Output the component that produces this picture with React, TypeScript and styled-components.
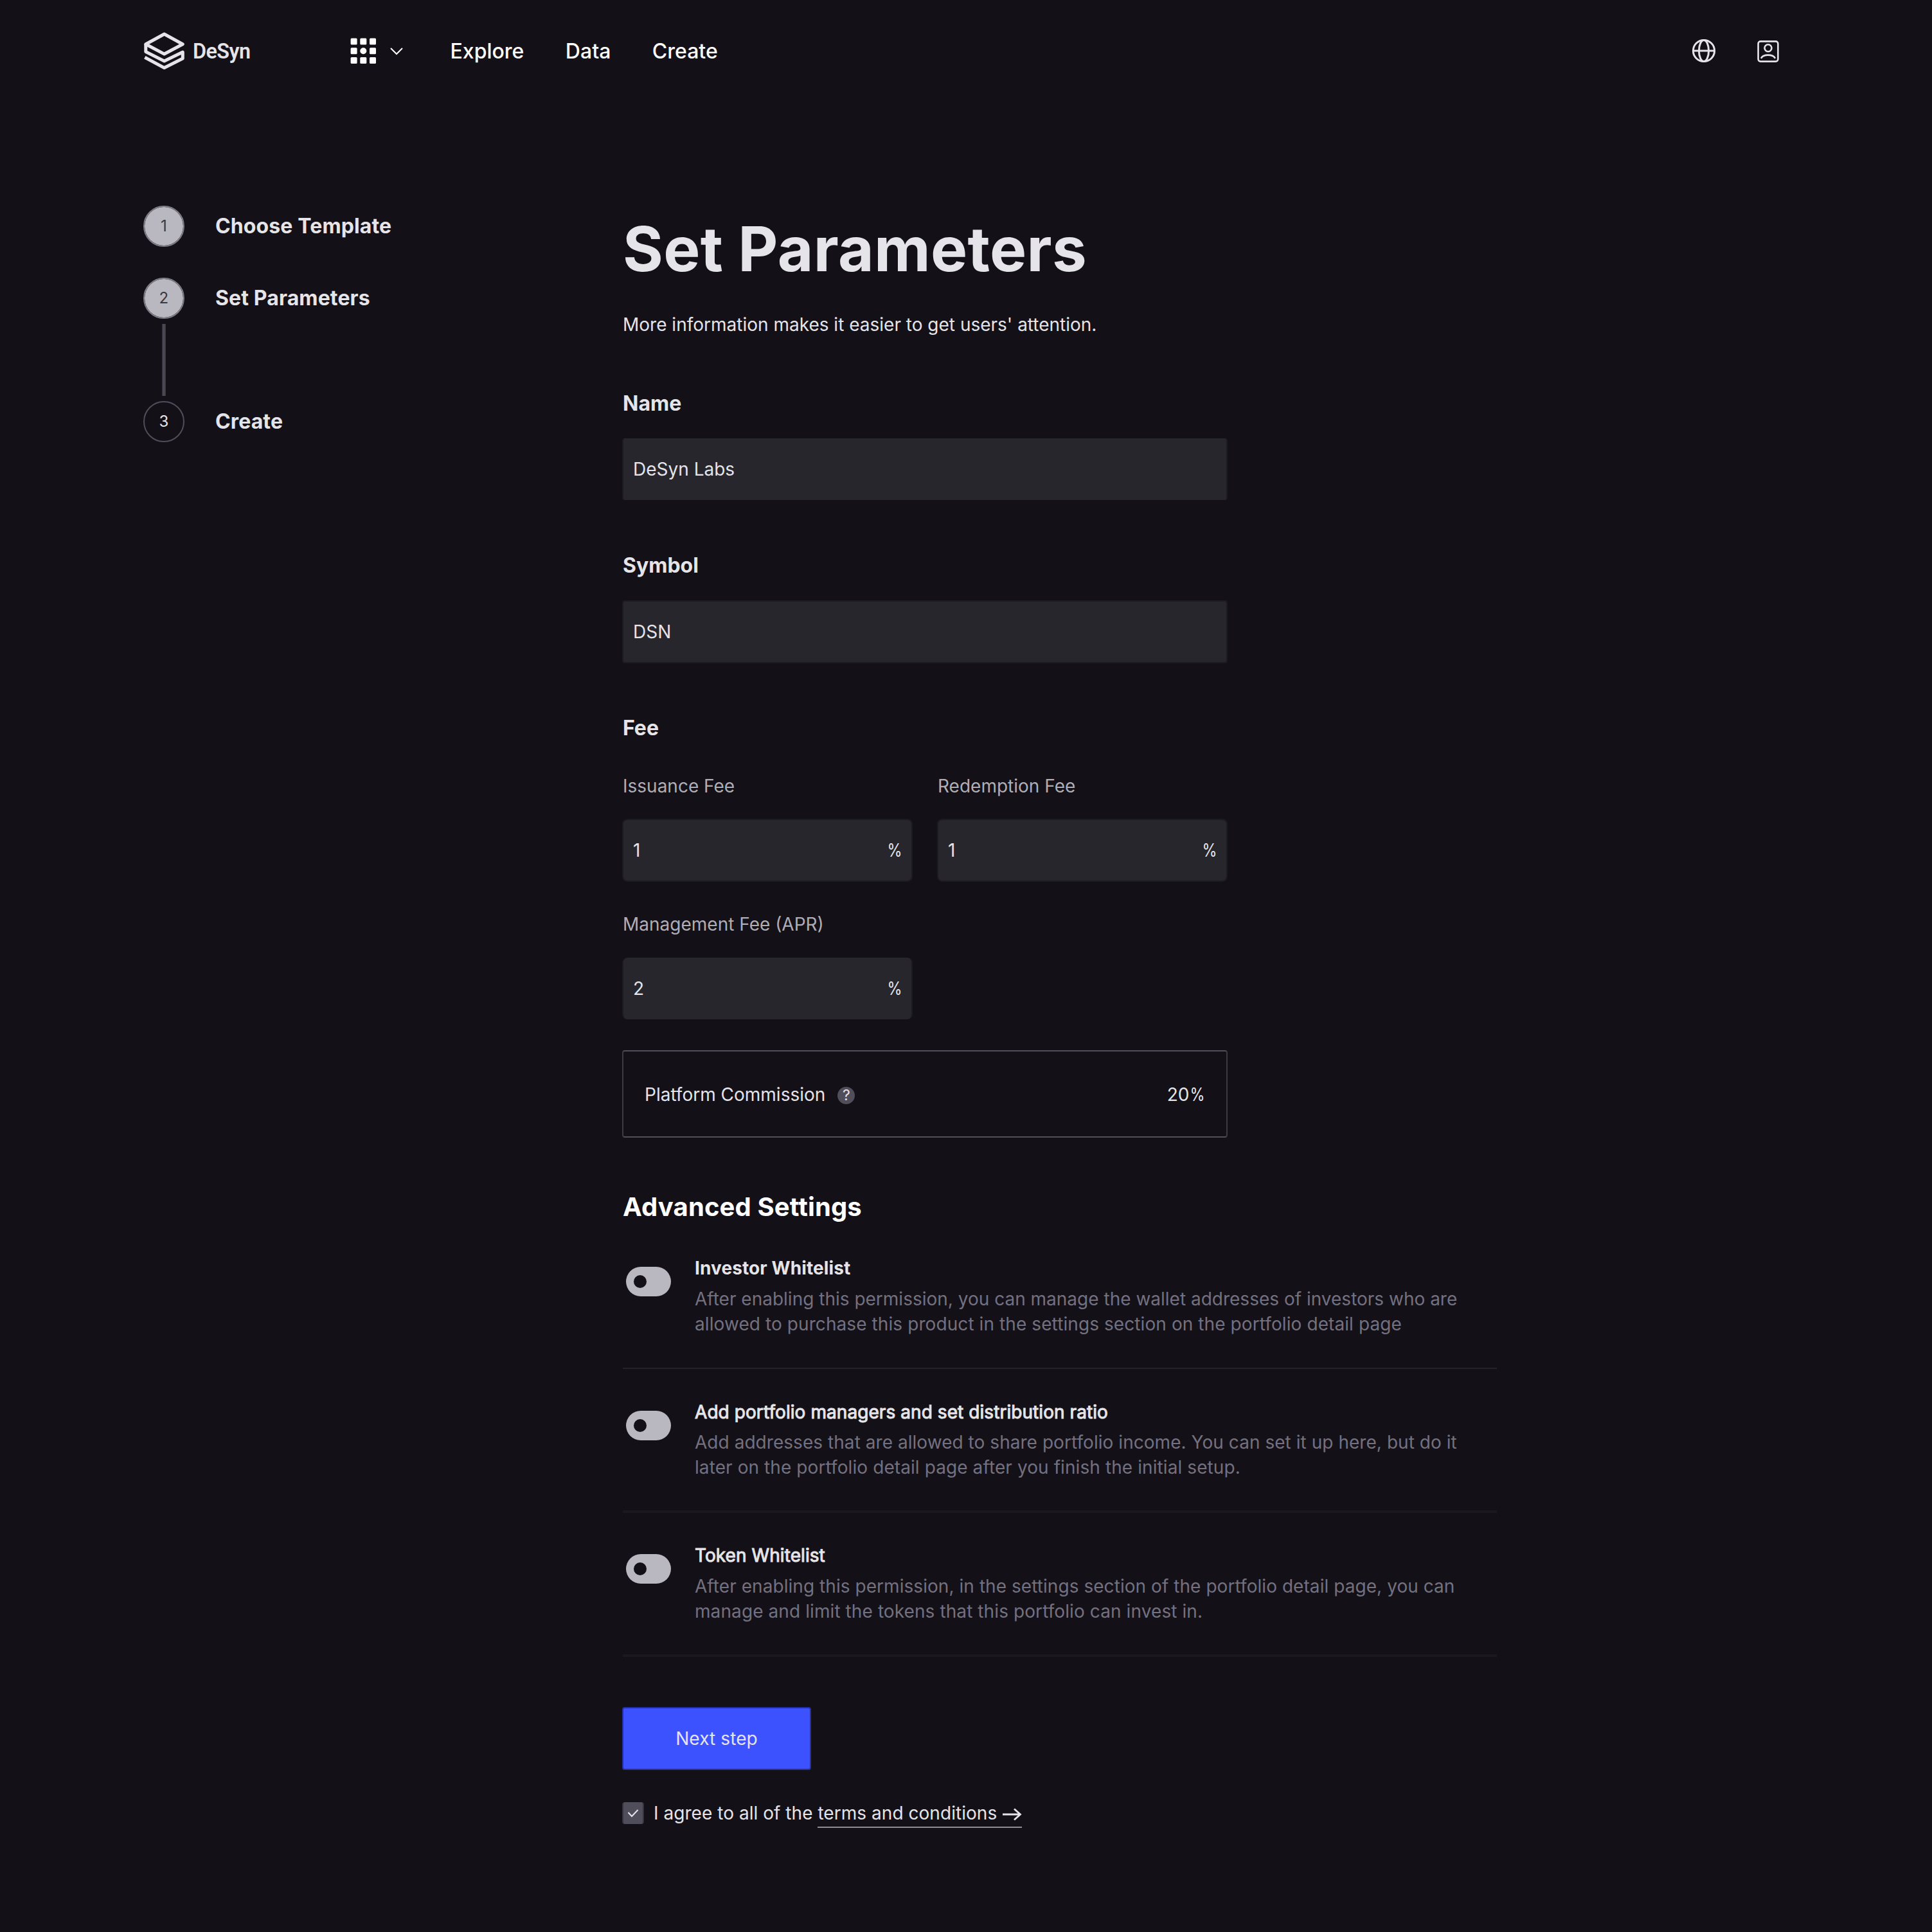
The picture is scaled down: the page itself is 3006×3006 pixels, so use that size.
import React from "react";
import styled, { createGlobalStyle } from "styled-components";

const c = {
  bg: "#131017",
  text: "#e5e4e8",
  label: "#afadb5",
  muted: "#737080",
  field: "#27262c",
  fieldEdge: "#1d1b22",
  line: "#504e5b",
  lineEdge: "#3d3a45",
  pale: "#b9b7bf",
  blue: "#3c52ff",
};

const Global = createGlobalStyle`
  *, *::before, *::after { box-sizing: border-box; }
  html, body { margin: 0; background: ${c.bg}; }
  body {
    font-family: Inter, "Liberation Sans", sans-serif;
    font-size: 28px;
    color: ${c.text};
  }
  h1, h2, h3, p { margin: 0; }
  svg { display: block; flex: none; }
`;

const Page = styled.div`
  width: 3006px;
  height: 3006px;
  overflow: hidden;
  background: ${c.bg};
`;

const Header = styled.header`
  height: 160px;
  padding: 0 237px 0 223px;
  display: flex;
  align-items: center;
`;

const Brand = styled.div`
  display: flex;
  align-items: center;
  width: 321px;
  gap: 11px;
`;

const BrandName = styled.span`
  margin-bottom: 3px;
  font-family: Roboto, sans-serif;
  font-weight: 600;
  font-size: 34px;
  line-height: 40px;
  letter-spacing: -0.6px;
  transform: scaleX(0.95);
  transform-origin: left center;
`;

const AppsButton = styled.div`
  display: flex;
  align-items: center;
  gap: 21px;
  width: 156.5px;
`;

const Nav = styled.nav`
  display: flex;
  gap: 64.5px;
  font-size: 32px;
  font-weight: 500;
  line-height: 40px;
  color: #fff;
`;

const HeaderIcons = styled.div`
  margin-left: auto;
  display: flex;
  align-items: center;
  gap: 63px;
`;

const GlobeSvg = styled.svg`
  margin-bottom: 2px;
`;

const Body = styled.div`
  display: flex;
  align-items: flex-start;
  padding: 160px 0 0 223px;
`;

const Steps = styled.aside`
  width: 746px;
  display: flex;
  flex-direction: column;
`;

const StepRow = styled.div<{ $gap?: number }>`
  display: flex;
  align-items: center;
  gap: 48px;
  margin-top: ${(p) => p.$gap ?? 0}px;
  font-size: 32px;
  font-weight: 700;
  line-height: 40px;
  letter-spacing: 0.12px;
`;

const StepDot = styled.span<{ $on: boolean }>`
  width: 64px;
  height: 64px;
  border-radius: 50%;
  border: 2px solid ${(p) => (p.$on ? "#7f7d87" : c.line)};
  background: ${(p) => (p.$on ? c.pale : "transparent")};
  background-clip: padding-box;
  color: ${(p) => (p.$on ? "#3a3840" : c.text)};
  display: flex;
  align-items: center;
  justify-content: center;
  font-size: 24px;
  font-weight: 400;
`;

const StepLine = styled.span`
  width: 6px;
  height: 112px;
  margin: 8px 0 8px 29px;
  border: solid ${c.lineEdge};
  border-width: 0 2px;
  background: ${c.line};
`;

const Form = styled.main`
  width: 1360px;
  padding-top: 9px;
  display: flex;
  flex-direction: column;
`;

const Title = styled.h1`
  font-size: 96px;
  line-height: 116px;
  font-weight: 700;
  letter-spacing: 0.35px;
`;

const Intro = styled.p`
  margin-top: 40px;
  line-height: 40px;
`;

const SectionTitle = styled.h3<{ $gap: number }>`
  margin-top: ${(p) => p.$gap}px;
  font-size: 32px;
  line-height: 40px;
  font-weight: 700;
`;

const Field = styled.div<{ $gap: number; $round?: boolean; $edge?: boolean }>`
  width: ${(p) => (p.$round ? 452 : 942)}px;
  height: ${(p) => (p.$edge ? 98 : 96)}px;
  margin: ${(p) => p.$gap}px 0 0 -1px;
  padding: 0 15px;
  border: solid ${c.fieldEdge};
  border-width: ${(p) => (p.$edge ? 2 : 0)}px 2px;
  border-radius: ${(p) => (p.$round ? 8 : 4)}px;
  background: ${c.field};
  display: flex;
  align-items: center;
  justify-content: space-between;
  line-height: 40px;
`;

const Percent = styled.span`
  display: inline-block;
  margin-left: -4px;
  transform: scaleX(0.84);
  transform-origin: right center;
`;

const FeeRow = styled.div<{ $gap: number }>`
  margin-top: ${(p) => p.$gap}px;
  display: flex;
  gap: 39px;
`;

const FeeLabel = styled.div`
  line-height: 40px;
  color: ${c.label};
`;

const Commission = styled.div`
  width: 942px;
  height: 136px;
  margin: 48px 0 0 -1px;
  padding: 2px 34px 0 33px;
  border: 2px solid;
  border-color: ${c.line} ${c.lineEdge};
  border-radius: 4px;
  display: flex;
  align-items: center;
  justify-content: space-between;
  line-height: 40px;
`;

const CommissionLabel = styled.span`
  display: flex;
  align-items: center;
  gap: 19px;
`;

const Help = styled.span`
  width: 27px;
  height: 27px;
  margin-top: 2px;
  border-radius: 50%;
  background: ${c.line};
  display: flex;
  align-items: center;
  justify-content: center;
  font-size: 23px;
  line-height: 26px;
`;

const AdvancedTitle = styled.h2`
  margin: 84px 0 51px;
  font-size: 40px;
  line-height: 48px;
  font-weight: 700;
  letter-spacing: 0.13px;
  color: #fff;
`;

const Settings = styled.div`
  display: flex;
  flex-direction: column;
  gap: 46px;
`;

const Setting = styled.section<{ $soft: boolean }>`
  height: ${(p) => (p.$soft ? 178 : 177)}px;
  padding-left: 5px;
  border-bottom: ${(p) => (p.$soft ? "4px solid #1b191f" : "2px solid #25232a")};
  display: flex;
  gap: 37px;
`;

const Toggle = styled.span<{ $nudge: number }>`
  width: 70px;
  height: 46px;
  margin-top: ${(p) => 18 + p.$nudge}px;
  padding-left: 12px;
  border-radius: 23px;
  background: ${c.pale};
  display: flex;
  align-items: center;
`;

const Knob = styled.span`
  width: 20px;
  height: 20px;
  border-radius: 50%;
  background: ${c.bg};
`;

const SettingTitle = styled.div<{ $strong: boolean; $nudge: number }>`
  padding-top: ${(p) => p.$nudge}px;
  margin-bottom: ${(p) => 9 - p.$nudge}px;
  line-height: 40px;
  font-weight: ${(p) => (p.$strong ? 700 : 400)};
  letter-spacing: ${(p) => (p.$strong ? 0.1 : 0.07)}px;
  -webkit-text-stroke: ${(p) => (p.$strong ? 0 : 1)}px currentColor;
`;

const SettingLine = styled.p<{ $tracking: number }>`
  line-height: 39px;
  color: ${c.muted};
  letter-spacing: ${(p) => p.$tracking}px;
  white-space: nowrap;
`;

const NextButton = styled.button`
  width: 294px;
  height: 98px;
  margin: 78px 0 0 -1px;
  padding: 0;
  border: 2px solid #28319b;
  border-radius: 4px;
  background: ${c.blue};
  color: ${c.text};
  font: inherit;
  letter-spacing: 0.1px;
`;

const Agree = styled.div`
  height: 43px;
  margin: 47px 0 0 -1px;
  display: flex;
  align-items: flex-start;
  line-height: 40px;
  letter-spacing: 0.04px;
  white-space: pre;
`;

const Check = styled.span`
  width: 34px;
  height: 34px;
  margin: 3px 15px 0 0;
  border: solid #36343e;
  border-width: 0 2px;
  border-radius: 4px;
  background: ${c.line};
  display: flex;
  align-items: center;
  justify-content: center;
`;

const Terms = styled.a`
  display: flex;
  align-items: flex-start;
  gap: 9px;
  height: 43px;
  border-bottom: 2px solid #8f8d96;
`;

const ArrowSvg = styled.svg`
  margin-top: 12px;
`;

const settings = [
  {
    title: "Investor Whitelist",
    strong: true,
    nudge: 0,
    lines: [
      { text: "After enabling this permission, you can manage the wallet addresses of investors who are", tracking: 0 },
      { text: "allowed to purchase this product in the settings section on the portfolio detail page", tracking: 0.085 },
    ],
  },
  {
    title: "Add portfolio managers and set distribution ratio",
    strong: false,
    nudge: 1,
    lines: [
      { text: "Add addresses that are allowed to share portfolio income. You can set it up here, but do it", tracking: 0.045 },
      { text: "later on the portfolio detail page after you finish the initial setup.", tracking: 0.085 },
    ],
  },
  {
    title: "Token Whitelist",
    strong: false,
    nudge: 0,
    lines: [
      { text: "After enabling this permission, in the settings section of the portfolio detail page, you can", tracking: 0.055 },
      { text: "manage and limit the tokens that this portfolio can invest in.", tracking: 0.09 },
    ],
  },
];

const Logo = () => (
  <svg width="66" height="60" viewBox="0 0 66 60" fill="none" stroke={c.text} strokeWidth="5" strokeLinejoin="round">
    <path d="M3.8 18.7 L32.6 3 L61.3 18.7 L32.6 34 Z" />
    <path d="M3.8 18.7 V30.5 L32.6 45 L61.3 31 V41 L32.6 55.5 L2.3 39.3" />
  </svg>
);

const GridIcon = () => (
  <svg width="42" height="42" viewBox="0 0 42 42" fill="#fff">
    {[0, 1, 2].map((row) =>
      [0, 1, 2].map((col) => (
        <rect
          key={`${row}${col}`}
          x={1.6 + col * 14.7}
          y={0.4 + row * 14.8}
          width="10"
          height="10"
          rx={row === 1 && col === 1 ? 5 : 1.5}
        />
      )),
    )}
  </svg>
);

const Chevron = () => (
  <svg width="20" height="12" viewBox="0 0 20 12" fill="none" stroke="#fff" strokeWidth="2">
    <path d="M1 1 L10 10 L19 1" />
  </svg>
);

const Globe = () => (
  <GlobeSvg width="38" height="38" viewBox="0 0 38 38" fill="none" stroke={c.text} strokeWidth="3">
    <circle cx="19" cy="19" r="16.6" />
    <ellipse cx="19" cy="19" rx="7.6" ry="16.6" />
    <path d="M2.4 19 H35.6" />
  </GlobeSvg>
);

const Profile = () => (
  <svg width="36" height="36" viewBox="0 0 36 36" fill="none" stroke={c.text} strokeWidth="2.6">
    <rect x="2.6" y="2.4" width="30.8" height="31.2" rx="3.5" />
    <circle cx="18" cy="12.7" r="5.5" />
    <path d="M7.5 28 C11 22.2 25 22.2 28.5 28" strokeLinecap="round" />
  </svg>
);

export default function App() {
  return (
    <>
      <Global />
      <Page>
        <Header>
          <Brand>
            <Logo />
            <BrandName>DeSyn</BrandName>
          </Brand>
          <AppsButton>
            <GridIcon />
            <Chevron />
          </AppsButton>
          <Nav>
            <span>Explore</span>
            <span>Data</span>
            <span>Create</span>
          </Nav>
          <HeaderIcons>
            <Globe />
            <Profile />
          </HeaderIcons>
        </Header>
        <Body>
          <Steps>
            <StepRow>
              <StepDot $on>1</StepDot>Choose Template
            </StepRow>
            <StepRow $gap={48}>
              <StepDot $on>2</StepDot>Set Parameters
            </StepRow>
            <StepLine />
            <StepRow>
              <StepDot $on={false}>3</StepDot>Create
            </StepRow>
          </Steps>
          <Form>
            <Title>Set Parameters</Title>
            <Intro>More information makes it easier to get users' attention.</Intro>
            <SectionTitle $gap={83}>Name</SectionTitle>
            <Field $gap={34}>DeSyn Labs</Field>
            <SectionTitle $gap={82}>Symbol</SectionTitle>
            <Field $gap={34} $edge>DSN</Field>
            <SectionTitle $gap={81}>Fee</SectionTitle>
            <FeeRow $gap={50}>
              <div>
                <FeeLabel>Issuance Fee</FeeLabel>
                <Field $gap={31} $round $edge>
                  <span>1</span>
                  <Percent>%</Percent>
                </Field>
              </div>
              <div>
                <FeeLabel>Redemption Fee</FeeLabel>
                <Field $gap={31} $round $edge>
                  <span>1</span>
                  <Percent>%</Percent>
                </Field>
              </div>
            </FeeRow>
            <FeeRow $gap={46}>
              <div>
                <FeeLabel>Management Fee (APR)</FeeLabel>
                <Field $gap={32} $round>
                  <span>2</span>
                  <Percent>%</Percent>
                </Field>
              </div>
            </FeeRow>
            <Commission>
              <CommissionLabel>
                Platform Commission <Help>?</Help>
              </CommissionLabel>
              <span>
                20<Percent>%</Percent>
              </span>
            </Commission>
            <AdvancedTitle>Advanced Settings</AdvancedTitle>
            <Settings>
              {settings.map((s, i) => (
                <Setting key={s.title} $soft={i > 0}>
                  <Toggle $nudge={s.nudge}>
                    <Knob />
                  </Toggle>
                  <div>
                    <SettingTitle $strong={s.strong} $nudge={s.nudge}>
                      {s.title}
                    </SettingTitle>
                    {s.lines.map((line) => (
                      <SettingLine key={line.text} $tracking={line.tracking}>
                        {line.text}
                      </SettingLine>
                    ))}
                  </div>
                </Setting>
              ))}
            </Settings>
            <NextButton>Next step</NextButton>
            <Agree>
              <Check>
                <svg width="18" height="14" viewBox="0 0 18 14" fill="none" stroke={c.text} strokeWidth="2">
                  <path d="M1.5 6 L7 12 L16.5 2" />
                </svg>
              </Check>
              {"I agree to all of the "}
              <Terms>
                terms and conditions
                <ArrowSvg width="30" height="20" viewBox="0 0 30 20" fill="none" stroke={c.text} strokeWidth="2.8">
                  <path d="M0 10 H27.5 M18 1.5 L27.5 10 L18 18.5" />
                </ArrowSvg>
              </Terms>
            </Agree>
          </Form>
        </Body>
      </Page>
    </>
  );
}
